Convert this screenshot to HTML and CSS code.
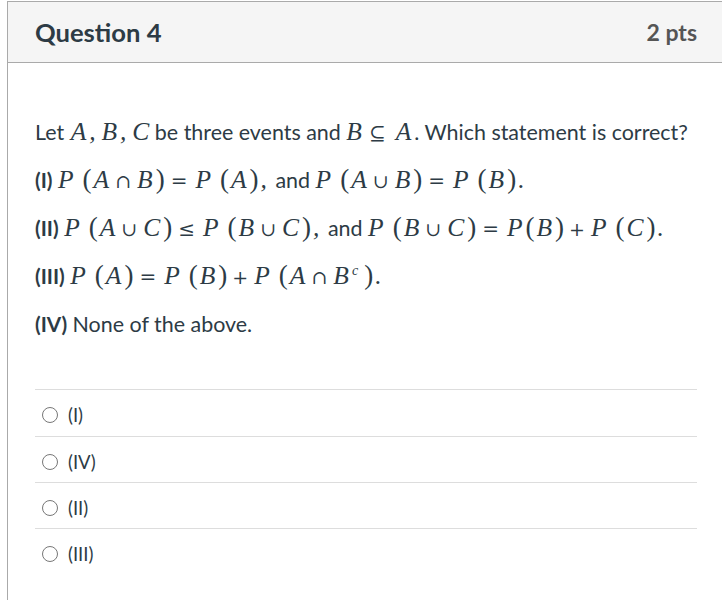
FILE: index.html
```html
<!DOCTYPE html>
<html lang="en">
<head>
<meta charset="UTF-8" />
<title>Question 4</title>
<link rel="stylesheet" href="styles.css">
</head>
<body>
<div class="question">
    <div class="question-header">
        <h2 class="question-title">Question 4</h2>
        <div class="question-points">2 pts</div>
    </div>
    <div class="question-body">
        <p class="statement">Let <span class="math math-list">A, B, C</span> be three events and <span class="math math-subset">B<span class="op">⊆</span>A</span>. Which statement is correct?</p>
        <p class="statement"><strong>(I)</strong> <span class="math">P<span class="fn">(</span>A<span class="bin">∩</span>B<span class="paren">)</span><span class="op">=</span>P<span class="fn">(</span>A<span class="paren">)</span>,</span> and <span class="math">P<span class="fn">(</span>A<span class="bin">∪</span>B<span class="paren">)</span><span class="op">=</span>P<span class="fn">(</span>B<span class="paren">)</span>.</span></p>
        <p class="statement"><strong>(II)</strong> <span class="math">P<span class="fn">(</span>A<span class="bin">∪</span>C<span class="paren">)</span><span class="op">≤</span>P<span class="fn">(</span>B<span class="bin">∪</span>C<span class="paren">)</span>,</span> and <span class="math">P<span class="fn">(</span>B<span class="bin">∪</span>C<span class="paren">)</span><span class="op">=</span>P<span class="paren">(</span>B<span class="paren">)</span><span class="bin">+</span>P<span class="fn">(</span>C<span class="paren">)</span>.</span></p>
        <p class="statement"><strong>(III)</strong> <span class="math">P<span class="fn">(</span>A<span class="paren">)</span><span class="op">=</span>P<span class="fn">(</span>B<span class="paren">)</span><span class="bin">+</span>P<span class="fn">(</span>A<span class="bin">∩</span>B<sup class="sup">c</sup><span class="paren">)</span>.</span></p>
        <p class="statement"><strong>(IV)</strong> None of the above.</p>
    </div>
    <div class="answers">
        <label class="answer"><span class="radio"></span>(I)</label>
        <label class="answer"><span class="radio"></span>(IV)</label>
        <label class="answer"><span class="radio"></span>(II)</label>
        <label class="answer"><span class="radio"></span>(III)</label>
    </div>
</div>
</body>
</html>
```

FILE: styles.css
```css
body, html {
    margin: 0;
    padding: 0;
    background: #fff;
    overflow: hidden;
    height: 100%;
}

body {
    font-family: Lato, "Noto Sans", sans-serif;
    color: #2d3b45;
    padding-top: 1px;
    padding-left: 7px;
    box-sizing: border-box;
}

.question {
    border-left: 1px solid #aaa;
    border-top: 1px solid #aaa;
    height: 600px;
}

.question-header {
    display: flex;
    justify-content: space-between;
    align-items: center;
    height: 60px;
    padding: 0 25px 0 27px;
    background: #f5f5f5;
    border-bottom: 1px solid #aaa;
}

.question-title {
    margin: 0;
    font-size: 25.6px;
    font-weight: 700;
}

.question-points {
    font-size: 23px;
    font-weight: 700;
    color: #555;
}

.question-body {
    padding: 56px 25px 0 27px;
}

.statement {
    margin: 0 0 22px;
    font-size: 21.45px;
    line-height: 26px;
    white-space: nowrap;
}

.statement strong {
    font-size: 20.7px;
    font-weight: 700;
}

/* formula text, spaced out to the width of the typeset maths */
.math {
    font-family: "Liberation Serif", serif;
    font-style: italic;
    font-size: 25.5px;
    line-height: 0;
    letter-spacing: 3px;
}

.math-list {
    margin: 0 -3px 0 1px;
    word-spacing: -6.5px;
}

.math-subset .op {
    margin-right: 10px;
}

.op, .bin, .paren, .fn {
    font-style: normal;
}

.op {
    font-family: "DejaVu Serif", serif;
    font-size: 20px;
    letter-spacing: 0;
    margin: 0 8px 0 4px;
}

.bin {
    font-family: "DejaVu Serif", serif;
    font-size: 19px;
    letter-spacing: 0;
    margin: 0 6px 0 3px;
}

.paren {
    font-size: 27px;
    font-weight: 300;
    letter-spacing: 2px;
}

.fn {
    font-size: 27px;
    letter-spacing: 2px;
    margin-left: 6px;
}

.sup {
    font-size: 14px;
    line-height: 0;
    margin-right: 3px;
}

.answers {
    margin: 52px 25px 0 27px;
}

.answer {
    display: flex;
    align-items: center;
    gap: 10px;
    height: 41px;
    padding: 4px 0 0 7px;
    border-top: 1px solid #ddd;
    font-size: 18.5px;
}

.answer:first-child {
    height: 42px;
}

.radio {
    width: 14px;
    height: 14px;
    border: 1px solid #777;
    border-radius: 50%;
}
```
